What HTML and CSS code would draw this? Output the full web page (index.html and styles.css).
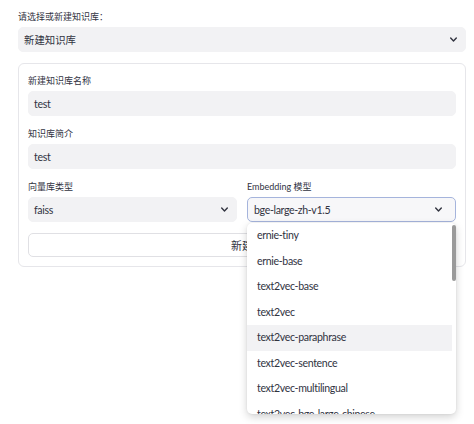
FILE: index.html
```html
<!DOCTYPE html>
<html lang="zh">
<head>
  <meta charset="UTF-8">
  <title>知识库管理</title>
  <link rel="stylesheet" href="styles.css">
</head>
<body>

<div class="page">
  <div class="field">
    <label class="field-label">请选择或新建知识库：</label>
    <div class="select cjk">
      <span>新建知识库</span>
      <svg class="chev" viewBox="0 0 10 6"><path d="M1 1l4 4 4-4"/></svg>
    </div>
  </div>

  <form class="form-box">
    <div class="field">
      <label class="field-label">新建知识库名称</label>
      <div class="input">test</div>
    </div>

    <div class="field">
      <label class="field-label">知识库简介</label>
      <div class="input">test</div>
    </div>

    <div class="row">
      <div class="field">
        <label class="field-label">向量库类型</label>
        <div class="select">
          <span>faiss</span>
          <svg class="chev" viewBox="0 0 10 6"><path d="M1 1l4 4 4-4"/></svg>
        </div>
      </div>
      <div class="field open">
        <label class="field-label">Embedding 模型</label>
        <div class="select focused">
          <span>bge-large-zh-v1.5</span>
          <svg class="chev" viewBox="0 0 10 6"><path d="M1 1l4 4 4-4"/></svg>
        </div>

        <!-- open dropdown list -->
        <ul class="menu">
          <li>ernie-tiny</li>
          <li>ernie-base</li>
          <li>text2vec-base</li>
          <li>text2vec</li>
          <li class="hover">text2vec-paraphrase</li>
          <li>text2vec-sentence</li>
          <li>text2vec-multilingual</li>
          <li>text2vec-bge-large-chinese</li>
        </ul>
        <div class="scroll-thumb"></div>
      </div>
    </div>

    <button type="button" class="btn">新建</button>
  </form>
</div>

</body>
</html>
```

FILE: styles.css
```css
html,
body {
  margin: 0;
  min-height: 424px;
  background: #fff;
}

body {
  color: #31333f;
  font-family: 'Lato', 'Noto Sans CJK SC', sans-serif;
}

.page {
  padding: 10px 8px 0 18px;
  width: 448px;
  min-height: 414px;
}

.field {
  display: flex;
  flex-direction: column;
}

.field-label {
  font-size: 9px;
  line-height: 14px;
  margin-bottom: 3px;
  color: #31333f;
}

.select,
.input {
  height: 25px;
  box-sizing: border-box;
  background: #f2f2f4;
  border: 1px solid #f2f2f4;
  border-radius: 5px;
  display: flex;
  align-items: center;
  padding: 0 6px 0 5px;
  font-size: 10.6px;
  letter-spacing: -0.35px;
}

.select.cjk {
  font-size: 10.4px;
  letter-spacing: 0;
}

.select span {
  flex: 1;
}

.chev {
  width: 7px;
  height: 5px;
  margin-right: 2px;
}

.chev path {
  fill: none;
  stroke: #31333f;
  stroke-width: 2;
  stroke-linecap: round;
  stroke-linejoin: round;
}

.select.focused {
  border-color: #a5b4dc;
  background: #f7f7f9;
  padding-left: 6px;
}

.select.focused .chev {
  margin-right: 7px;
}

.form-box {
  margin-top: 11px;
  border: 1px solid #e6e6ea;
  border-radius: 6px;
  padding: 10px 9px 9px 9px;
  display: flex;
  flex-direction: column;
  gap: 11px;
}

.row {
  display: flex;
  gap: 10px;
}

.row .field {
  flex: 1;
  position: relative;
}

.btn {
  height: 24px;
  background: #fff;
  border: 1px solid #e0e0e4;
  border-radius: 5px;
  font-family: 'Lato', 'Noto Sans CJK SC', sans-serif;
  font-size: 11px;
  color: #31333f;
}

.menu {
  position: absolute;
  top: 43px;
  left: 0;
  right: 0;
  height: 191px;
  margin: 0;
  padding: 0;
  list-style: none;
  background: #fff;
  border-radius: 5px;
  box-shadow: 0 3px 8px rgba(0, 0, 0, 0.18), 0 0 2px rgba(0, 0, 0, 0.08);
  overflow: hidden;
  z-index: 5;
}

.menu li {
  height: 25.5px;
  line-height: 25.5px;
  padding-left: 10px;
  font-size: 10.6px;
  letter-spacing: -0.35px;
}

.menu li.hover {
  background: #f2f2f4;
  margin-right: 4px;
}

.scroll-thumb {
  position: absolute;
  top: 45px;
  right: 0;
  width: 4px;
  height: 56px;
  background: #9a9a9a;
  border-radius: 2px;
  z-index: 6;
}
```
